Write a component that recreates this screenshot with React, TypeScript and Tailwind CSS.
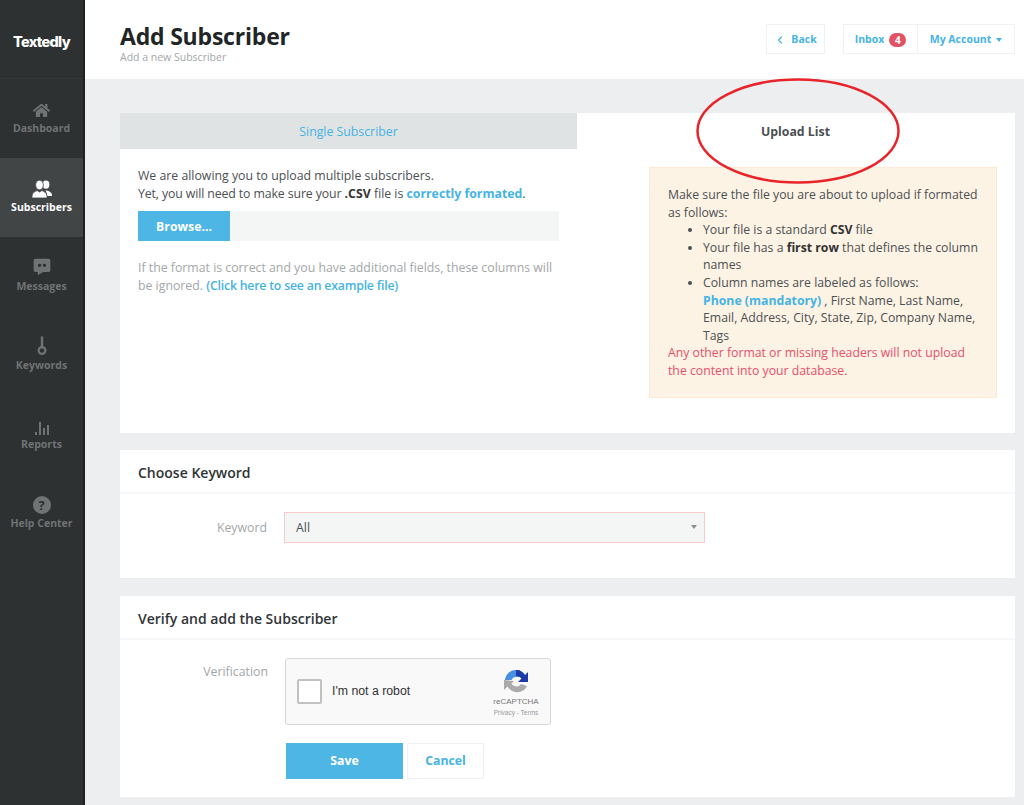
import { ChevronLeft } from "lucide-react";
import { FaHome } from "react-icons/fa";
import { BiSolidMessageDots } from "react-icons/bi";

function UsersIcon() {
  return (
    <svg width="20" height="18" viewBox="0 0 20 18" fill="#ffffff">
      <ellipse cx="14" cy="4.6" rx="3.4" ry="4.2" />
      <path d="M13.5 10.5 C16.5 10.5 20 12 20 15.5 L20 16 L15 16 C15 13.5 14.5 11.8 13.5 10.5 Z" />
      <ellipse cx="7.5" cy="5" rx="3.9" ry="4.8" stroke="#414546" strokeWidth="0.8" />
      <path d="M0 18 L0 16.2 C0 13 3 11.2 5.2 10.6 L7.5 12 L9.8 10.6 C12 11.2 15 13 15 16.2 L15 18 Z" stroke="#414546" strokeWidth="0.8" />
    </svg>
  );
}

function KeyIcon() {
  return (
    <svg width="12" height="20" viewBox="0 0 12 20" className="text-[#6f7374]">
      <rect x="4.8" y="0.5" width="2.4" height="12" fill="currentColor" />
      <circle cx="6" cy="14.5" r="3.4" fill="none" stroke="currentColor" strokeWidth="2.2" />
    </svg>
  );
}

function BarsIcon() {
  return (
    <svg width="16" height="14" viewBox="0 0 16 14" fill="#6f7374">
      <rect x="1" y="11" width="2" height="3" />
      <rect x="5" y="1" width="2" height="13" />
      <rect x="9" y="7" width="2" height="7" />
      <rect x="13" y="4" width="2" height="10" />
    </svg>
  );
}

function HelpIcon() {
  return (
    <div className="w-[18px] h-[18px] rounded-full bg-[#6f7374] flex items-center justify-center text-[13px] leading-none font-bold text-[#2d3132]">
      ?
    </div>
  );
}

function NavItem({ icon, label, active }: { icon: React.ReactNode; label: string; active?: boolean }) {
  return (
    <div className={`h-[79px] flex flex-col items-center pt-[20px] ${active ? "bg-[#414546] text-white" : "text-[#6f7374]"}`}>
      <div className="h-[20px] flex items-end justify-center">{icon}</div>
      <div className="text-[10.5px] font-bold leading-[14px] mt-[2px]">{label}</div>
    </div>
  );
}

function RecaptchaLogo() {
  return (
    <svg width="28" height="28" viewBox="0 0 28 28" fill="none">
      <path d="M3 11 A11 11 0 0 1 14 2 L18 2 L18 9 L14 9 A5 5 0 0 0 9.5 12 L3 12 Z" fill="#4a90e2" />
      <path d="M14 2 A11 11 0 0 1 23 7 L26 4 L26 14 L16 14 L19.5 10.5 A6 6 0 0 0 14 8 Z" fill="#1c3aa9" />
      <path d="M2 12 L2 22 L5.5 18.5 A11 11 0 0 0 25 18 L19 16 A5.5 5.5 0 0 1 9.5 15.5 L12 13 Z" fill="#ababab" />
    </svg>
  );
}

export default function App() {
  return (
    <div className="relative w-[1024px] h-[805px] overflow-hidden flex bg-[#eceef0] font-['Open_Sans',sans-serif] text-[#4b5052]">
      <aside className="w-[85px] shrink-0 bg-[#2d3132] border-r-2 border-[#1f2223]">
        <div className="h-[79px] flex items-center justify-center pt-[6px] border-b border-[#333738]">
          <span className="text-white text-[14.5px] font-extrabold tracking-[-0.7px] font-['Inter',sans-serif]">Textedly</span>
        </div>
        <NavItem icon={<FaHome size={17} color="#6f7374" />} label="Dashboard" />
        <NavItem icon={<UsersIcon />} label="Subscribers" active />
        <NavItem icon={<BiSolidMessageDots size={20} color="#6f7374" />} label="Messages" />
        <NavItem icon={<KeyIcon />} label="Keywords" />
        <NavItem icon={<BarsIcon />} label="Reports" />
        <NavItem icon={<HelpIcon />} label="Help Center" />
      </aside>

      <div className="flex-1 flex flex-col min-w-0">
        <header className="h-[79px] shrink-0 bg-white flex items-start justify-between pl-[35px] pr-[9px]">
          <div className="pt-[20px]">
            <h1 className="text-[23px] leading-[32px] font-bold tracking-[-0.2px] text-[#222526]">Add Subscriber</h1>
            <p className="text-[10.5px] leading-[11px] text-[#a3a7a9]">Add a new Subscriber</p>
          </div>
          <div className="flex pt-[24px] text-[10.5px] font-bold text-[#45b4e3]">
            <button className="h-[30px] w-[59px] mr-[18px] pt-[1px] flex items-center justify-center gap-[5px] border border-[#eff1f2] font-bold">
              <ChevronLeft size={12} strokeWidth={2.5} />
              Back
            </button>
            <button className="h-[30px] w-[75px] pt-[1px] flex items-center justify-center gap-[5px] border border-[#eff1f2] font-bold">
              Inbox
              <span className="w-[17px] h-[14px] rounded-full bg-[#e25264] text-white text-[10px] leading-[14px] text-center">4</span>
            </button>
            <button className="h-[30px] w-[97px] pt-[1px] flex items-center justify-center gap-[5px] border border-l-0 border-[#eff1f2] font-bold">
              My Account
              <span className="w-0 h-0 border-x-[3.5px] border-x-transparent border-t-[4px] border-t-[#45b4e3]" />
            </button>
          </div>
        </header>

        <main className="flex-1 pt-[34px] pl-[35px] pr-[9px]">
          <section className="bg-white h-[320px]">
            <div className="flex h-[36px] text-[12.3px]">
              <div className="w-[457px] pt-[2px] bg-[#dfe3e4] flex items-center justify-center text-[#45b4e3]">Single Subscriber</div>
              <div className="flex-1 pt-[2px] flex items-center justify-center font-bold text-[#4b5052] pr-[1px]">Upload List</div>
            </div>
            <div className="flex justify-between pl-[18px] pr-[18px]">
              <div className="w-[421px] pt-[18px] text-[12.3px] leading-[17.5px]">
                <p>We are allowing you to upload multiple subscribers.</p>
                <p>
                  <span className="tracking-[-0.11px]">Yet, you will need to make sure your</span> <b className="text-[#333]">.CSV</b> file is{" "}
                  <b className="text-[#45b4e3]">correctly formated</b>.
                </p>
                <div className="mt-[9px] h-[30px] bg-[#f4f6f6] flex">
                  <div className="w-[92px] pt-[1px] bg-[#4db6e5] text-white font-bold flex items-center justify-center">Browse...</div>
                </div>
                <p className="mt-[18px] text-[#a3a7a9]">
                  If the format is correct and you have additional fields, these columns will be ignored.{" "}
                  <span className="text-[#45b4e3] font-semibold tracking-[-0.2px]">(Click here to see an example file)</span>
                </p>
              </div>
              <div className="w-[348px] h-[231px] mt-[18px] bg-[#fdf3e4] border border-[#fbe9d6] pt-[18px] pl-[18px] pr-[14px] text-[12.25px] leading-[17.6px]">
                <p>Make sure the file you are about to upload if formated as follows:</p>
                <ul className="list-disc pl-[35px]">
                  <li>Your file is a standard <b className="text-[#333]">CSV</b> file</li>
                  <li>Your file has a <b className="text-[#333]">first row</b> that defines the column names</li>
                  <li>
                    Column names are labeled as follows:
                    <br />
                    <b className="text-[#45b4e3]">Phone (mandatory)</b> , First Name, Last Name, Email, Address, City, State, Zip, Company Name, Tags
                  </li>
                </ul>
                <p className="text-[#e5506b]">Any other format or missing headers will not upload the content into your database.</p>
              </div>
            </div>
          </section>

          <section className="bg-white h-[128px] mt-[17px]">
            <h2 className="h-[44px] border-b-2 border-[#f7f8f8] pl-[18px] pt-[1px] text-[14px] leading-[44px] font-semibold text-[#2f3335]">Choose Keyword</h2>
            <div className="flex items-center pt-[18px]">
              <label className="w-[164px] pr-[17px] pt-[1px] text-right text-[12.3px] text-[#a3a7a9]">Keyword</label>
              <div className="w-[421px] h-[31px] pt-[1px] bg-[#f4f6f6] border border-[#f8c9cf] flex items-center justify-between pl-[11px] pr-[7px] text-[12.3px]">
                All
                <span className="w-0 h-0 mb-[3px] border-x-[3px] border-x-transparent border-t-[4px] border-t-[#8a8f91]" />
              </div>
            </div>
          </section>

          <section className="bg-white h-[201px] mt-[18px]">
            <h2 className="h-[44px] border-b-2 border-[#f7f8f8] pl-[18px] pt-[1px] text-[14px] leading-[44px] font-semibold text-[#2f3335]">Verify and add the Subscriber</h2>
            <div className="flex items-start pt-[18px]">
              <label className="w-[165px] pr-[17px] pt-[5px] text-right text-[12.3px] text-[#a3a7a9]">Verification</label>
              <div className="relative w-[266px] h-[67px] bg-[#f9f9f9] border border-[#d8d8d8] rounded-[3px] flex items-center font-['Liberation_Sans',sans-serif]">
                <div className="w-[25px] h-[25px] ml-[11px] mr-[10px] bg-white border-2 border-[#c1c1c1] rounded-[2px]" />
                <span className="text-[12.3px] text-[#333]">I'm not a robot</span>
                <div className="absolute right-[9px] top-[9px] w-[50px] flex flex-col items-center">
                  <RecaptchaLogo />
                  <span className="text-[8px] leading-[10px] mt-[1px] text-[#777]">reCAPTCHA</span>
                  <span className="text-[6.5px] leading-[11px] text-[#999]">Privacy - Terms</span>
                </div>
              </div>
            </div>
            <div className="flex pl-[166px] pt-[18px] text-[12.3px] font-bold">
              <button className="w-[117px] h-[36px] pt-[1px] bg-[#4db6e5] text-white font-bold">Save</button>
              <button className="w-[77px] h-[36px] ml-[4px] pt-[1px] bg-white border border-[#eff1f2] text-[#45b4e3] font-bold">Cancel</button>
            </div>
          </section>
        </main>
      </div>

      <svg className="absolute left-[695px] top-[77px]" width="206" height="108" viewBox="0 0 206 108" fill="none">
        <ellipse cx="103" cy="54" rx="100.5" ry="51.5" stroke="#e8232a" strokeWidth="2.5" />
      </svg>
    </div>
  );
}
